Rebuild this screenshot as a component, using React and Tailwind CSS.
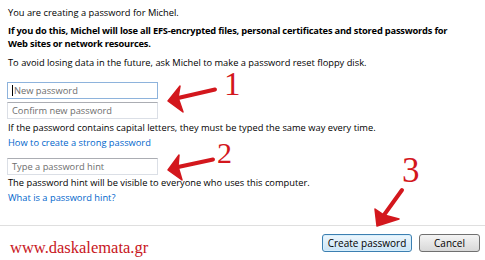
const fieldBase = 'flex h-[17px] w-[151px] items-center -ml-px border bg-white pl-[4px] text-[#6d6d6d]'

function Field({ placeholder, focused }) {
  return (
    <div className={focused ? `${fieldBase} border-[#8eb3dc]` : `${fieldBase} border-[#dbdfe6] border-t-[#abadb3]`}>
      {focused && <span className="mr-px h-[11px] w-px bg-black" />}
      {placeholder}
    </div>
  )
}

function Arrows() {
  return (
    <svg className="pointer-events-none absolute left-0 top-0" width="485" height="260" viewBox="0 0 485 260">
      <g fill="#d3171d" stroke="#d3171d" strokeLinecap="round" strokeLinejoin="round">
        <line x1="178" y1="98" x2="215" y2="89.5" strokeWidth="4" />
        <path d="M168 101 L180 86 L178 97.5 L183 112 Z" strokeWidth="1.5" />
        <line x1="178" y1="167" x2="213" y2="159.5" strokeWidth="4" />
        <path d="M168 170 L179 155 L178 166.5 L182 180 Z" strokeWidth="1.5" />
        <line x1="384" y1="215" x2="402" y2="190" strokeWidth="4" />
        <path d="M377 226 L375 209 L384 215 L399 219 Z" strokeWidth="1.5" />
      </g>
    </svg>
  )
}

export default function App() {
  return (
    <div className="relative h-[260px] w-[485px] overflow-hidden bg-white font-['Open_Sans',sans-serif] text-[9.3px] text-black">
      <div className="flex h-[225px] flex-col pl-[8px] pt-[6px]">
        <p className="leading-[13px]">You are creating a password for Michel.</p>
        <p className="mt-[5px] whitespace-nowrap font-bold leading-[13px] tracking-[-0.2px]">
          If you do this, Michel will lose all EFS-encrypted files, personal certificates and stored passwords for
          <br />
          Web sites or network resources.
        </p>
        <p className="mt-[6px] leading-[13px]">To avoid losing data in the future, ask Michel to make a password reset floppy disk.</p>
        <div className="mt-[13px] flex flex-col gap-[3px]">
          <Field placeholder="New password" focused />
          <Field placeholder="Confirm new password" />
        </div>
        <p className="mt-[1px] leading-[15px]">If the password contains capital letters, they must be typed the same way every time.</p>
        <a className="w-fit leading-[15px] text-[#0066cc]">How to create a strong password</a>
        <div className="mt-[8px]">
          <Field placeholder="Type a password hint" />
        </div>
        <p className="leading-[15px]">The password hint will be visible to everyone who uses this computer.</p>
        <a className="w-fit leading-[15px] text-[#0066cc]">What is a password hint?</a>
      </div>
      <div className="flex h-[35px] items-start justify-between border-t border-[#dfdfdf] pl-[10px] pr-[5px] pt-[8px]">
        <span className="mt-[6px] font-['Liberation_Serif',serif] text-[16.5px] leading-none text-[#c8161d]">www.daskalemata.gr</span>
        <div className="flex gap-[7px]">
          <button className="h-[18px] w-[90px] rounded-[3px] border border-[#3c7fb1] bg-linear-to-b from-[#eef7fd] to-[#c9e3f5] text-[10px] leading-none shadow-[inset_0_0_0_1px_#d8effc]">Create password</button>
          <button className="h-[18px] w-[61px] rounded-[3px] border border-[#707070] bg-linear-to-b from-[#f4f4f4] to-[#d8d8d8] text-[10px] leading-none">Cancel</button>
        </div>
      </div>
      <Arrows />
      <span className="absolute left-[224px] top-[68px] font-['Liberation_Serif',serif] text-[33px] leading-none text-[#d3171d]">1</span>
      <span className="absolute left-[217px] top-[138px] font-['Liberation_Serif',serif] text-[30px] leading-none text-[#d3171d]">2</span>
      <span className="absolute left-[402px] top-[153px] font-['Liberation_Serif',serif] text-[35px] leading-none text-[#d3171d]">3</span>
    </div>
  )
}
